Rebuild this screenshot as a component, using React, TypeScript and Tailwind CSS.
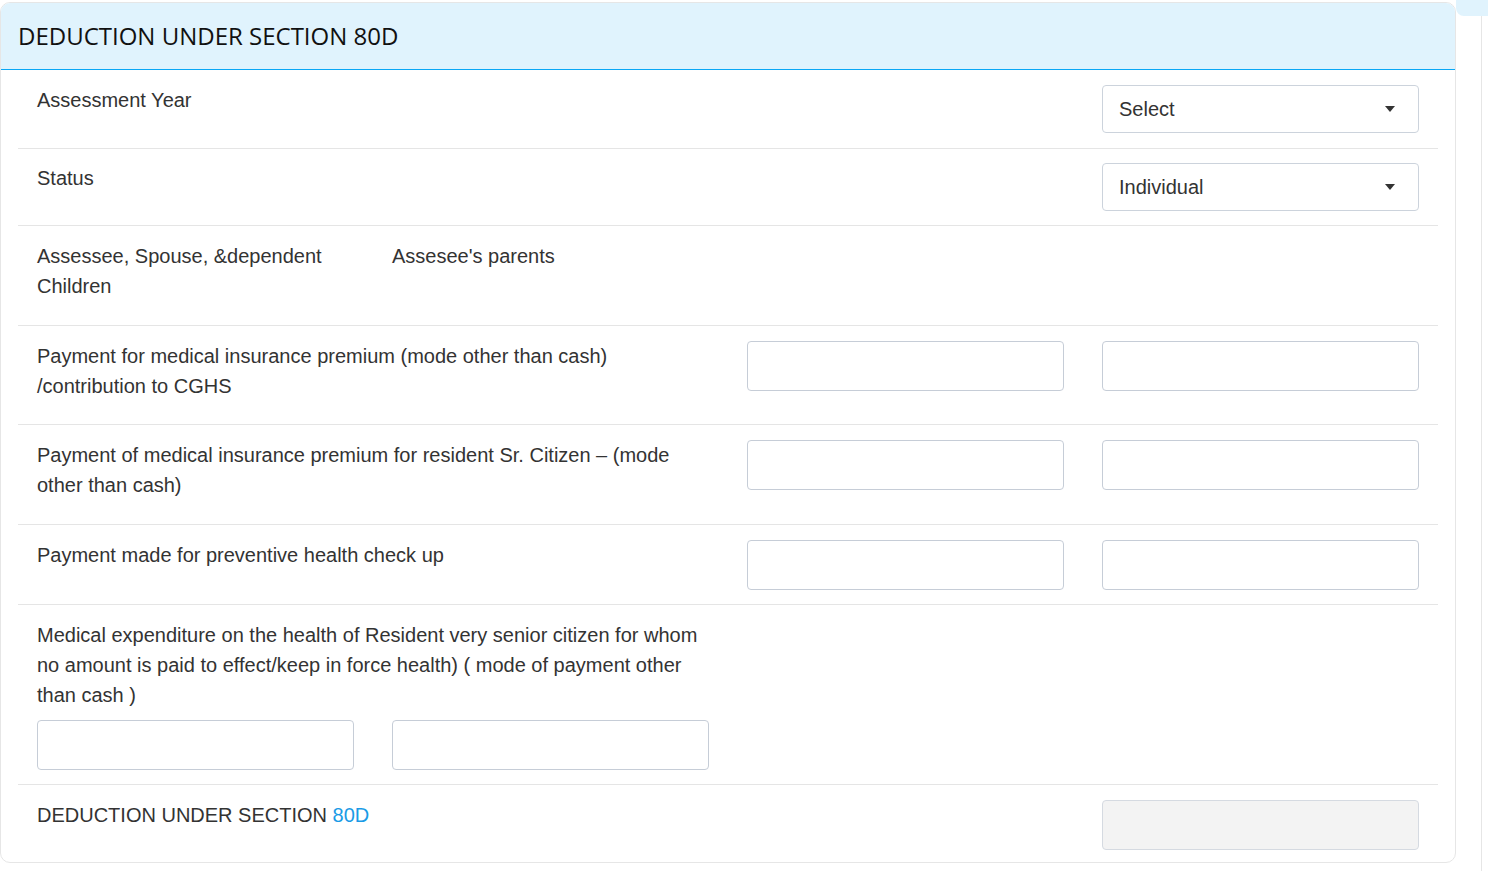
import React from "react";

const Caret = () => (
  <svg width="10" height="6" viewBox="0 0 10 6" className="absolute right-[23px] top-1/2 -translate-y-1/2">
    <path d="M0 0h10L5 6z" fill="#333" />
  </svg>
);

const Sel = ({ v }: { v: string }) => (
  <div className="relative h-[48px] border border-[#ccd3dc] rounded-[4px] flex items-center pl-[16px] text-[20px] text-[#333]">
    {v}
    <Caret />
  </div>
);

const Inp = ({ ro }: { ro?: boolean }) => (
  <div className={`h-[50px] border rounded-[4px] ${ro ? "bg-[#f3f3f3] border-[#d5dae1]" : "border-[#c6cdd7] bg-white"}`} />
);

export default function App() {
  return (
    <div className="w-[1488px] h-[871px] bg-white relative overflow-hidden" style={{ fontFamily: '"Liberation Sans", Arial, sans-serif' }}>
      <div className="absolute right-0 top-0 w-[32px] h-[16px] bg-[#e0f3fd] rounded-bl-[8px]" />
      <div className="absolute left-[1481px] top-[16px] bottom-0 w-px bg-[#e6e6e6]" />
      <div className="mt-[2px] w-[1456px] h-[861px] border border-[#e6e6e6] rounded-[10px] overflow-hidden">
        <div className="h-[67px] bg-[#e0f3fd] border-b border-b-[#0aa7f5] flex items-center pl-[17px] text-[24px] text-[#111] font-medium" style={{ fontFamily: '"Open Sans", sans-serif' }}>
          DEDUCTION UNDER SECTION 80D
        </div>
        <div className="px-[17px] text-[20px] leading-[30px] text-[#333]">
          <div className="h-[79px] border-b border-[#e5e5e5] grid grid-cols-4 pt-[15px]">
            <div className="col-span-3 px-[19px]">Assessment Year</div>
            <div className="px-[19px]"><Sel v="Select" /></div>
          </div>
          <div className="h-[77px] border-b border-[#e5e5e5] grid grid-cols-4 pt-[14px]">
            <div className="col-span-3 px-[19px]">Status</div>
            <div className="px-[19px]"><Sel v="Individual" /></div>
          </div>
          <div className="h-[100px] border-b border-[#e5e5e5] grid grid-cols-4 pt-[15px]">
            <div className="px-[19px]">Assessee, Spouse, &amp;dependent Children</div>
            <div className="px-[19px]">Assesee's parents</div>
          </div>
          {[
            ["Payment for medical insurance premium (mode other than cash) /contribution to CGHS", 99],
            ["Payment of medical insurance premium for resident Sr. Citizen – (mode other than cash)", 100],
            ["Payment made for preventive health check up", 80],
          ].map(([t, h], i) => (
            <div key={i} className="border-b border-[#e5e5e5] grid grid-cols-4 pt-[15px]" style={{ height: h as number }}>
              <div className="col-span-2 px-[19px]">{t}</div>
              <div className="px-[19px]"><Inp /></div>
              <div className="px-[19px]"><Inp /></div>
            </div>
          ))}
          <div className="h-[180px] border-b border-[#e5e5e5] grid grid-cols-4 pt-[15px]">
            <div className="col-span-2 px-[19px]">
              <div>Medical expenditure on the health of Resident very senior citizen for whom no amount is paid to effect/keep in force health) ( mode of payment other than cash )</div>
              <div className="grid grid-cols-2 -mx-[19px] mt-[10px]">
                <div className="px-[19px]"><Inp /></div>
                <div className="px-[19px]"><Inp /></div>
              </div>
            </div>
          </div>
          <div className="h-[79px] border-b border-[#e5e5e5] grid grid-cols-4 pt-[15px]">
            <div className="col-span-3 px-[19px]">DEDUCTION UNDER SECTION <span className="text-[#1a9be6]">80D</span></div>
            <div className="px-[19px]"><Inp ro /></div>
          </div>
        </div>
      </div>
    </div>
  );
}
